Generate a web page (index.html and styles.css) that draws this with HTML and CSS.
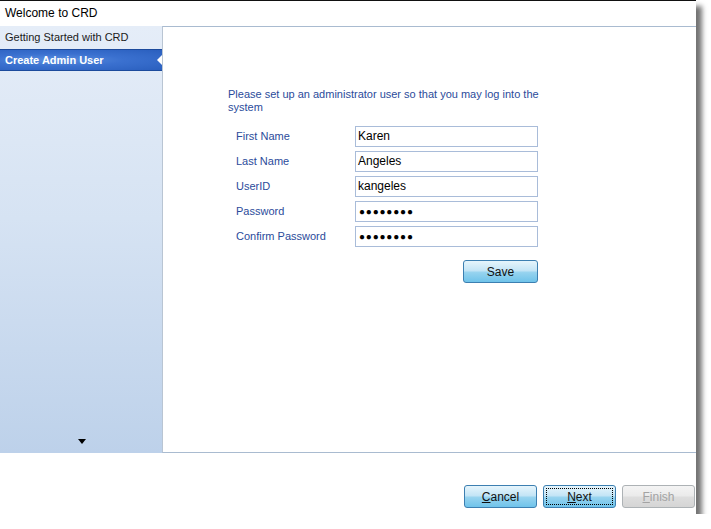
FILE: index.html
```html
<!DOCTYPE html>
<html>

<head>
    <meta charset="utf-8">
    <title>Welcome to CRD</title>
    <link rel="stylesheet" href="styles.css">
</head>

<body>
    <div class="window">
        <div class="titlebar">Welcome to CRD</div>
        <div class="main">
            <div class="sidebar">
                <div class="steps">
                    <div class="step">Getting Started with CRD</div>
                    <div class="step active">Create Admin User</div>
                </div>
                <div class="more"></div>
            </div>
            <div class="content">
                <p class="intro">Please set up an administrator user so that you may log into the system</p>
                <div class="form">
                    <label>First Name</label>
                    <div class="field">Karen</div>
                    <label>Last Name</label>
                    <div class="field">Angeles</div>
                    <label>UserID</label>
                    <div class="field">kangeles</div>
                    <label>Password</label>
                    <div class="field dots">&#9679;&#9679;&#9679;&#9679;&#9679;&#9679;&#9679;&#9679;</div>
                    <label>Confirm Password</label>
                    <div class="field dots">&#9679;&#9679;&#9679;&#9679;&#9679;&#9679;&#9679;&#9679;</div>
                </div>
                <div class="save-row">
                    <span class="btn save">Save</span>
                </div>
            </div>
        </div>
        <div class="footer">
            <span class="btn"><u>C</u>ancel</span>
            <span class="btn focus"><span class="ring"><u>N</u>ext</span></span>
            <span class="btn disabled"><u>F</u>inish</span>
        </div>
    </div>
</body>

</html>
```

FILE: styles.css
```css
* {
    margin: 0;
    padding: 0;
    box-sizing: border-box;
}

body {
    background: #fff;
    font-family: "Liberation Sans", Arial, sans-serif;
    font-size: 11px;
}

.window {
    width: 696px;
    height: 514px;
    background: #fff;
    border-top: 1px solid #111;
    box-shadow: 6px 6px 5px rgba(0, 0, 0, 0.55);
    display: flex;
    flex-direction: column;
}

.titlebar {
    height: 25px;
    line-height: 24px;
    padding-left: 5px;
    font-size: 12px;
    color: #000;
}

.main {
    height: 427px;
    display: flex;
}

.sidebar {
    width: 162px;
    background: linear-gradient(to bottom, #e5edf8 0%, #d6e3f3 45%, #bdd1ea 100%);
    display: flex;
    flex-direction: column;
    justify-content: space-between;
    padding-top: 1px;
}

.step {
    height: 21px;
    line-height: 21px;
    padding-left: 5px;
    color: #1b1b1b;
    margin-bottom: 1px;
}

.step.active {
    position: relative;
    height: 22px;
    color: #fff;
    font-weight: bold;
    background: radial-gradient(ellipse at 35% 50%, #5a8fe0 0%, #3a70cf 45%, #2a5fbe 100%);
    border-top: 1px solid #1c4a9c;
    border-bottom: 1px solid #1c4a9c;
    line-height: 20px;
}

.step.active:after {
    content: "";
    position: absolute;
    right: 0;
    top: 5px;
    border-top: 5px solid transparent;
    border-bottom: 5px solid transparent;
    border-right: 5px solid #fff;
}

.more {
    height: 16px;
    display: flex;
    justify-content: center;
    padding-top: 2px;
}

.more:before {
    content: "";
    width: 0;
    height: 0;
    margin-left: 2px;
    border-left: 4px solid transparent;
    border-right: 4px solid transparent;
    border-top: 5px solid #000;
}

.content {
    flex: 1;
    border-top: 1px solid #a9bbd0;
    border-left: 1px solid #b9c5d3;
    border-bottom: 1px solid #a9bbd0;
    padding: 61px 0 0 65px;
}

.intro {
    width: 320px;
    color: #2b4b9b;
    line-height: 13px;
}

.form {
    display: grid;
    grid-template-columns: 119px 183px;
    grid-auto-rows: 21px;
    row-gap: 4px;
    margin: 12px 0 0 8px;
}

.form label {
    color: #2b4b9b;
    line-height: 21px;
}

.field {
    border: 1px solid #a9bcd9;
    padding-left: 2px;
    line-height: 19px;
    font-size: 12px;
    color: #000;
}

.field.dots {
    font-size: 10px;
    letter-spacing: 0.8px;
    padding-left: 3px;
}

.save-row {
    width: 310px;
    display: flex;
    justify-content: flex-end;
    margin-top: 13px;
}

.btn {
    width: 73px;
    height: 23px;
    border: 1px solid #3c7fb1;
    border-radius: 3px;
    background: linear-gradient(to bottom, #e6f5fc 0%, #c4e5f6 45%, #96d3ef 55%, #6fc3ea 100%);
    display: flex;
    align-items: center;
    justify-content: center;
    color: #111;
    font-size: 12px;
}

.save {
    width: 75px;
}

.footer {
    flex: 1;
    display: flex;
    justify-content: flex-end;
    align-items: flex-start;
    gap: 6px;
    padding: 32px 1px 0 0;
}

.focus {
    padding: 2px;
}

.ring {
    width: 100%;
    height: 100%;
    border: 1px dotted #000;
    display: flex;
    align-items: center;
    justify-content: center;
}

.disabled {
    border-color: #adb2b5;
    background: linear-gradient(to bottom, #f4f4f4 0%, #ebebeb 45%, #dddddd 55%, #d5d5d5 100%);
    color: #a3a3a3;
}
```
